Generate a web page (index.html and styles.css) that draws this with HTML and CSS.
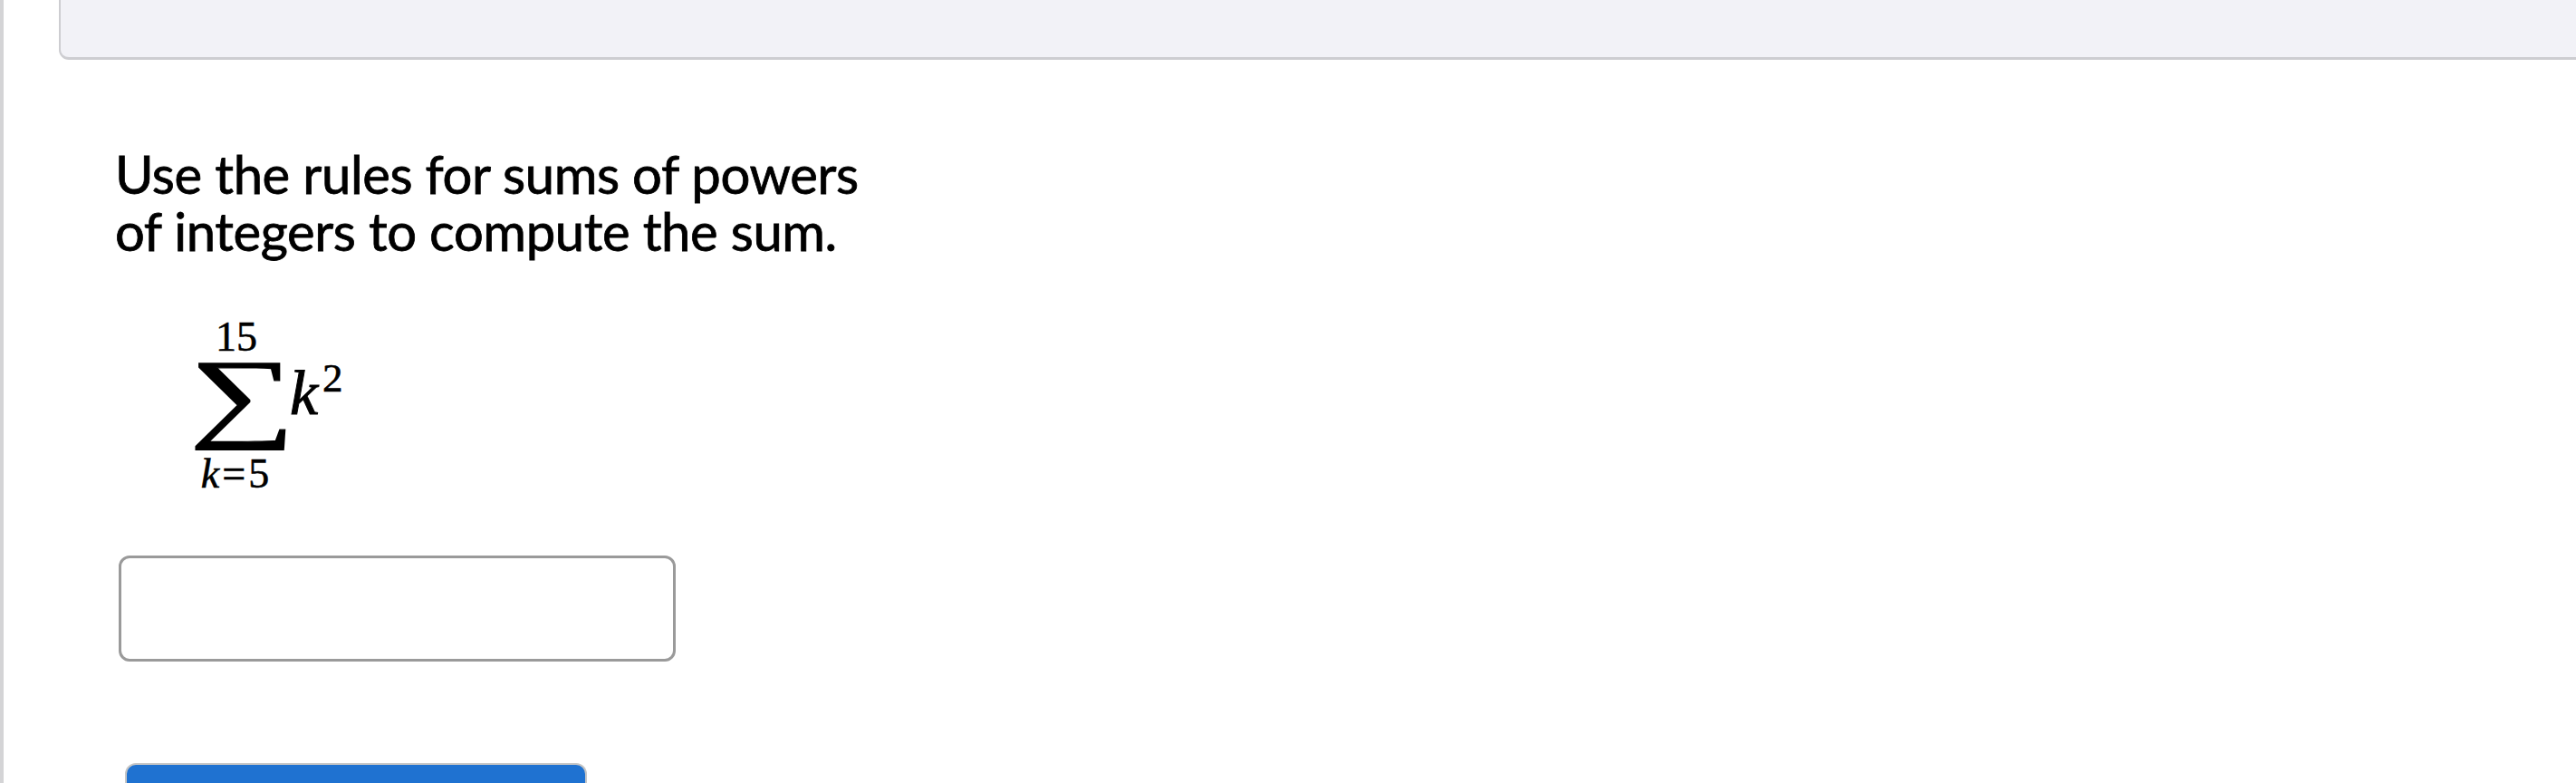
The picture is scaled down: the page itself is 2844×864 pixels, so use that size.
FILE: index.html
```html
<!DOCTYPE html>
<html lang="en">
<head>
<meta charset="utf-8">
<title>Sum of powers</title>
<link rel="stylesheet" href="styles.css">
</head>
<body>
<div class="page">
  <div class="toolbar"></div>
  <div class="question">
    <p class="prompt">Use the rules for sums of powers<br>of integers to compute the sum.</p>
    <div class="math">
      <div class="sum">
        <span class="limit upper">15</span>
        <span class="sigma"><span class="sigma-glyph">&#8721;</span></span>
        <span class="limit lower"><i>k</i>=5</span>
      </div>
      <div class="term"><i>k</i><sup>2</sup></div>
    </div>
    <input class="answer" type="text" aria-label="Answer">
    <button class="submit" type="button"></button>
  </div>
</div>
</body>
</html>
```
FILE: styles.css
```css
html, body {
  margin: 0;
  padding: 0;
  background: #ffffff;
  overflow: hidden;
}

.page {
  height: 100vh;
  border-left: 4px solid #d4d4d6;
  box-sizing: border-box;
  font-family: Lato, "Liberation Sans", sans-serif;
  color: #000;
}

.toolbar {
  margin-left: 61px;
  margin-right: -20px;
  height: 63px;
  background: #f2f2f7;
  border-style: solid;
  border-color: #cdcdd1;
  border-width: 0 0 3px 2px;
  border-bottom-left-radius: 11px;
}

.question {
  padding-left: 123px;
}

.prompt {
  margin: 94px 0 0 0;
  font-size: 58px;
  line-height: 63px;
  letter-spacing: -0.4px;
  -webkit-text-stroke: 0.8px #000;
}

.math {
  display: flex;
  align-items: flex-start;
  margin-top: 66px;
  margin-left: 88px;
  font-family: "Liberation Serif", "DejaVu Serif", serif;
  -webkit-text-stroke: 0.6px #000;
}

.sum {
  display: flex;
  flex-direction: column;
  align-items: center;
  width: 92px;
}

.limit {
  font-size: 46px;
  line-height: 40px;
}

.limit.lower {
  margin-top: 23px;
  font-size: 46px;
  letter-spacing: 3px;
}

.limit i {
  font-style: italic;
}

.sigma {
  display: block;
  width: 92px;
  font-size: 110px;
  line-height: 88px;
}

.sigma-glyph {
  display: inline-block;
  margin-left: -6px;
  transform: scaleX(1.49);
  transform-origin: 0 50%;
  -webkit-text-stroke: 1.2px #000;
}

.term {
  margin-top: 47px;
  margin-left: 13px;
  font-size: 70px;
  line-height: 70px;
  -webkit-text-stroke: 1px #000;
}

.term sup {
  font-size: 45px;
  line-height: 0;
  vertical-align: 25px;
  margin-left: 5px;
  -webkit-text-stroke: 0.6px #000;
}

.answer {
  display: block;
  margin: 70px 0 0 4px;
  width: 615px;
  height: 117px;
  box-sizing: border-box;
  border: 3px solid #9a9a9a;
  border-radius: 12px;
  background: #fff;
  outline: none;
}

.submit {
  display: block;
  margin: 112px 0 0 11px;
  width: 510px;
  height: 84px;
  background: #1f72d1;
  border: 2px solid #c6c6c6;
  border-radius: 12px;
}
```
